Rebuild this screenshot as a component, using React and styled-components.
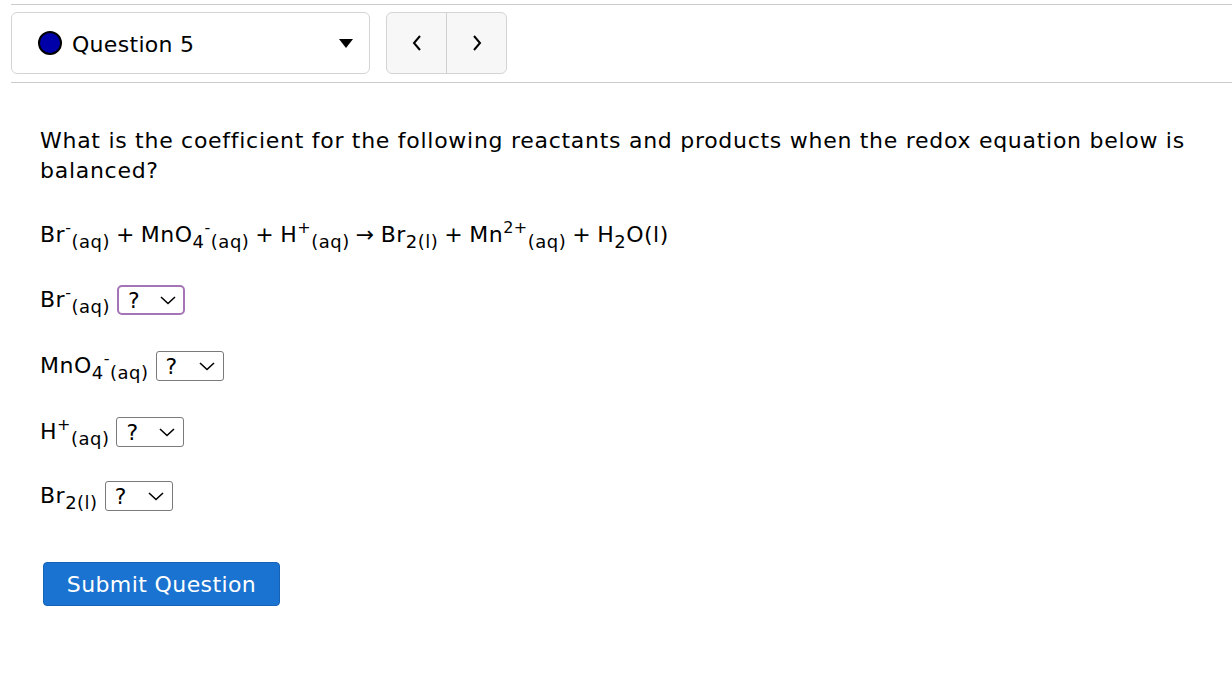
import React from "react";
import styled, { createGlobalStyle } from "styled-components";

const GlobalStyle = createGlobalStyle`
  body {
    margin: 0;
    background: #fff;
    color: #000;
    font-family: "DejaVu Sans", "Liberation Sans", sans-serif;
  }
`;

const Page = styled.div`
  padding: 4px 0 0 11px;
`;

const Rule = styled.div`
  border-top: 1px solid #cccccc;
`;

const Header = styled.div`
  display: flex;
  gap: 16px;
  padding: 7px 0 8px;
`;

const QuestionPicker = styled.div`
  box-sizing: border-box;
  width: 359px;
  height: 62px;
  border: 1px solid #d4d4d4;
  border-radius: 6px;
  display: flex;
  align-items: center;
  padding: 0 16px 0 26px;
  font-size: 22px;
  letter-spacing: 0.3px;
`;

const Dot = styled.span`
  box-sizing: border-box;
  width: 24px;
  height: 24px;
  border-radius: 50%;
  background: #0000a8;
  border: 2px solid #000;
  margin-right: 10px;
`;

const PickerLabel = styled.span`
  flex: 1;
  padding-top: 2px;
`;

const NavGroup = styled.div`
  box-sizing: border-box;
  width: 121px;
  height: 62px;
  display: flex;
  border: 1px solid #d4d4d4;
  border-radius: 6px;
  background: #f7f7f7;
  overflow: hidden;
`;

const NavButton = styled.button`
  flex: 1;
  border: none;
  background: transparent;
  display: flex;
  align-items: center;
  justify-content: center;
  padding: 0;
  & + & {
    border-left: 1px solid #d0d0d0;
  }
`;

const Content = styled.div`
  padding: 43px 0 0 29px;
  font-size: 22px;
  letter-spacing: 0.5px;
`;

const Prompt = styled.p`
  margin: 0;
  line-height: 30px;
  width: 1180px;
  letter-spacing: 0.72px;
`;

const Equation = styled.p`
  margin: 34px 0 0;
  line-height: 30px;
  word-spacing: -1.5px;
`;

const Sup = styled.sup`
  font-size: 16px;
  vertical-align: 9px;
  line-height: 0;
`;

const Sub = styled.sub`
  font-size: 18px;
  vertical-align: -6px;
  line-height: 0;
`;

const Row = styled.div`
  display: flex;
  align-items: center;
  gap: 7px;
  margin-top: ${(p) => p.$gap}px;
`;

const Species = styled.span`
  line-height: 30px;
`;

const SelectWrap = styled.span`
  position: relative;
  display: inline-flex;
`;

const Select = styled.select`
  appearance: none;
  box-sizing: border-box;
  width: 68px;
  height: 30px;
  padding: 0 0 0 9px;
  font: inherit;
  font-size: 22px;
  color: #000;
  background: #fff;
  border: ${(p) => (p.$focused ? "2px solid #a574b6" : "1px solid #7a7a7a")};
  border-radius: ${(p) => (p.$focused ? "5px" : "3px")};
  outline: none;
`;

const Chevron = styled.svg`
  position: absolute;
  right: 9px;
  top: 11px;
  pointer-events: none;
`;

const SubmitButton = styled.button`
  margin-top: 51px;
  margin-left: 3px;
  width: 237px;
  height: 44px;
  background: #1a73d0;
  color: #fff;
  border: 1px solid #1463b8;
  border-radius: 4px;
  font: inherit;
  font-size: 22px;
  letter-spacing: 0.4px;
`;

const Coefficient = ({ focused }) => (
  <SelectWrap>
    <Select $focused={focused} defaultValue="?">
      <option>?</option>
      <option>1</option>
      <option>2</option>
      <option>3</option>
      <option>4</option>
      <option>5</option>
      <option>6</option>
      <option>8</option>
      <option>10</option>
      <option>16</option>
    </Select>
    <Chevron width="16" height="9" viewBox="0 0 16 9">
      <path d="M1 1l7 6.5L15 1" fill="none" stroke="#000" strokeWidth="1.6" />
    </Chevron>
  </SelectWrap>
);

export default function App() {
  return (
    <>
      <GlobalStyle />
      <Page>
        <Rule />
        <Header>
          <QuestionPicker>
            <Dot />
            <PickerLabel>Question 5</PickerLabel>
            <svg width="14" height="9" viewBox="0 0 14 9">
              <path d="M0 0h14L7 9z" fill="#000" />
            </svg>
          </QuestionPicker>
          <NavGroup>
            <NavButton aria-label="previous">
              <svg width="10" height="16" viewBox="0 0 10 16">
                <path d="M8 1L2 8l6 7" fill="none" stroke="#000" strokeWidth="2" />
              </svg>
            </NavButton>
            <NavButton aria-label="next">
              <svg width="10" height="16" viewBox="0 0 10 16">
                <path d="M2 1l6 7-6 7" fill="none" stroke="#000" strokeWidth="2" />
              </svg>
            </NavButton>
          </NavGroup>
        </Header>
        <Rule />
        <Content>
          <Prompt>
            What is the coefficient for the following reactants and products when the redox
            equation below is balanced?
          </Prompt>
          <Equation>
            Br<Sup>-</Sup>
            <Sub>(aq)</Sub> + MnO<Sub>4</Sub>
            <Sup>-</Sup>
            <Sub>(aq)</Sub> + H<Sup>+</Sup>
            <Sub>(aq)</Sub> → Br<Sub>2(l)</Sub> + Mn<Sup>2+</Sup>
            <Sub>(aq)</Sub> + H<Sub>2</Sub>O(l)
          </Equation>
          <Row $gap={35}>
            <Species>
              Br<Sup>-</Sup>
              <Sub>(aq)</Sub>
            </Species>
            <Coefficient focused />
          </Row>
          <Row $gap={36}>
            <Species>
              MnO<Sub>4</Sub>
              <Sup>-</Sup>
              <Sub>(aq)</Sub>
            </Species>
            <Coefficient />
          </Row>
          <Row $gap={36}>
            <Species>
              H<Sup>+</Sup>
              <Sub>(aq)</Sub>
            </Species>
            <Coefficient />
          </Row>
          <Row $gap={34}>
            <Species>
              Br<Sub>2(l)</Sub>
            </Species>
            <Coefficient />
          </Row>
          <SubmitButton>Submit Question</SubmitButton>
        </Content>
      </Page>
    </>
  );
}
